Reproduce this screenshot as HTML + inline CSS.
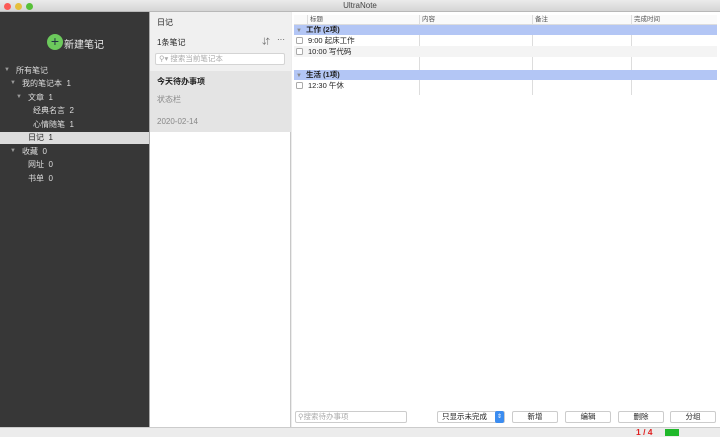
<!DOCTYPE html>
<html><head><meta charset="utf-8"><style>
*{margin:0;padding:0;box-sizing:border-box}
body{width:720px;height:437px;overflow:hidden;background:#ececec;font-family:"Liberation Sans","Noto Sans CJK SC",sans-serif;font-size:8px;color:#222;position:relative}
.a{position:absolute;white-space:nowrap}
.title{left:0;top:0;width:720px;height:12px;background:linear-gradient(#ebebeb,#d5d5d5);border-bottom:1px solid #b8b8b8;text-align:center;font-size:8px;line-height:12px;color:#444}
.dot{top:3px;width:7px;height:7px;border-radius:50%}
.side{left:0;top:12px;width:150px;height:415px;background:#373737;border-right:1px solid #aaa}
.tri{color:#999;font-size:6px}
.mid{left:150px;top:12px;width:141px;height:415px;background:#fff;border-right:1px solid #c8c8c8}
.right{left:292px;top:12px;width:428px;height:415px;background:#fff}
.btn{top:411px;height:12px;background:#fff;border:1px solid #ccc;border-radius:2px;text-align:center;line-height:10px;font-size:7.5px;color:#222}
.col{top:15px;width:1px;height:80px;background:#ddd}
.grp{left:294px;width:423px;height:10px;background:#b3c6f5;font-size:7.5px;font-weight:bold;line-height:10px}
.cb{left:296px;width:7px;height:7px;border:1px solid #aaa;border-radius:1.5px;background:#fff}
.row{left:308px;font-size:7.5px;line-height:10px}
.hd{top:15px;font-size:6.5px;color:#555;line-height:10px}
</style></head><body>
<div class="a title">UltraNote</div>
<div class="a dot" style="left:4px;background:#fc5b57"></div>
<div class="a dot" style="left:15px;background:#e5bf3c"></div>
<div class="a dot" style="left:26px;background:#57c038"></div>

<div class="a side"></div>
<div class="a" style="left:47px;top:34px;width:16px;height:16px;border-radius:50%;background:#6cc95c;color:#234;text-align:center;line-height:15px;font-size:14px">+</div>
<div class="a" style="left:64px;top:36px;color:#eee;font-size:10px">新建笔记</div>
<div class="a tri" style="left:4px;top:67px">▼</div><div class="a" style="left:16px;top:65px;color:#ddd">所有笔记</div>
<div class="a tri" style="left:10px;top:80px">▼</div><div class="a" style="left:22px;top:78px;color:#ddd">我的笔记本&nbsp; 1</div>
<div class="a tri" style="left:16px;top:94px">▼</div><div class="a" style="left:28px;top:92px;color:#ddd">文章&nbsp; 1</div>
<div class="a" style="left:33px;top:105px;color:#ddd">经典名言&nbsp; 2</div>
<div class="a" style="left:33px;top:119px;color:#ddd">心情随笔&nbsp; 1</div>
<div class="a" style="left:0;top:132px;width:149px;height:12px;background:#dcdcdc"></div>
<div class="a" style="left:28px;top:132px;color:#222">日记&nbsp; 1</div>
<div class="a tri" style="left:10px;top:148px">▼</div><div class="a" style="left:22px;top:146px;color:#ddd">收藏&nbsp; 0</div>
<div class="a" style="left:28px;top:159px;color:#ddd">网址&nbsp; 0</div>
<div class="a" style="left:28px;top:173px;color:#ddd">书单&nbsp; 0</div>

<div class="a mid"></div>
<div class="a" style="left:150px;top:12px;width:141px;height:59px;background:#f0f0f0"></div>
<div class="a" style="left:157px;top:17px">日记</div>
<div class="a" style="left:157px;top:37px">1条笔记</div>
<div class="a" style="left:262px;top:36px;color:#666">⇵</div>
<div class="a" style="left:277px;top:35px;color:#444">···</div>
<div class="a" style="left:155px;top:53px;width:130px;height:12px;background:#fff;border:1px solid #d4d4d4;border-radius:2px;color:#aaa;font-size:7.5px;line-height:10px;padding-left:3px">⚲▾ 搜索当前笔记本</div>
<div class="a" style="left:150px;top:71px;width:141px;height:61px;background:#e4e4e4"></div>
<div class="a" style="left:157px;top:76px;font-weight:bold">今天待办事项</div>
<div class="a" style="left:157px;top:94px;color:#888">状态栏</div>
<div class="a" style="left:157px;top:117px;color:#888">2020-02-14</div>

<div class="a right"></div>
<div class="a" style="left:294px;top:15px;width:423px;height:10px;background:#fafafa;border-bottom:1px solid #ddd"></div>
<div class="a col" style="left:307px;height:10px"></div>
<div class="a col" style="left:419px"></div>
<div class="a col" style="left:532px"></div>
<div class="a col" style="left:631px"></div>
<div class="a hd" style="left:310px">标题</div>
<div class="a hd" style="left:422px">内容</div>
<div class="a hd" style="left:535px">备注</div>
<div class="a hd" style="left:634px">完成时间</div>
<div class="a grp" style="top:25px"><span style="color:#888;font-size:6px;margin:0 4px 0 2px">▼</span>工作 (2项)</div>
<div class="a cb" style="top:37px"></div><div class="a row" style="top:36px">9:00 起床工作</div>
<div class="a" style="left:294px;top:46px;width:423px;height:11px;background:#f4f4f4"></div>
<div class="a cb" style="top:48px"></div><div class="a row" style="top:47px">10:00 写代码</div>
<div class="a grp" style="top:70px"><span style="color:#888;font-size:6px;margin:0 4px 0 2px">▼</span>生活 (1项)</div>
<div class="a cb" style="top:82px"></div><div class="a row" style="top:81px">12:30 午休</div>

<div class="a" style="left:295px;top:411px;width:112px;height:12px;border:1px solid #ccc;border-radius:2px;background:#fff;color:#aaa;font-size:7.5px;line-height:10px;padding-left:2px">⚲搜索待办事项</div>
<div class="a btn" style="left:437px;width:68px;text-align:left;padding-left:4px">只显示未完成<span style="position:absolute;right:0;top:-1px;width:9px;height:12px;background:#3b8cf0;border-radius:2px;color:#fff;font-size:6px;text-align:center;line-height:12px">⇕</span></div>
<div class="a btn" style="left:512px;width:46px">新增</div>
<div class="a btn" style="left:565px;width:46px">编辑</div>
<div class="a btn" style="left:618px;width:46px">删除</div>
<div class="a btn" style="left:670px;width:46px">分组</div>

<div class="a" style="left:0;top:427px;width:720px;height:10px;background:#ececec;border-top:1px solid #ccc"></div>
<div class="a" style="left:636px;top:427px;color:#e02020;font-weight:bold;font-size:8.5px">1 / 4</div>
<div class="a" style="left:665px;top:429px;width:14px;height:7px;background:#1fb82a"></div>
</body></html>
